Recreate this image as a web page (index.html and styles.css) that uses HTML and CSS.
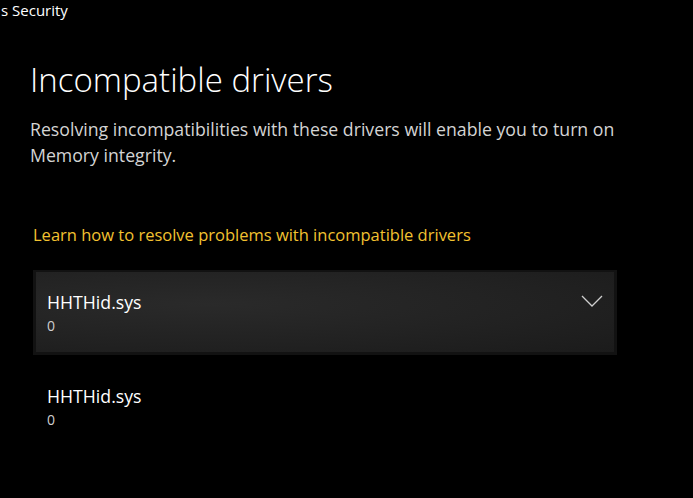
FILE: index.html
```html
<!DOCTYPE html>
<html lang="en">
<head>
    <meta charset="UTF-8">
    <title>Incompatible drivers</title>
    <link rel="stylesheet" href="styles.css">
</head>
<body>
    <div class="titlebar">s Security</div>

    <div class="page">
        <h1>Incompatible drivers</h1>
        <p class="intro">Resolving incompatibilities with these drivers will enable you to turn on Memory integrity.</p>

        <a class="learn-link" href="#">Learn how to resolve problems with incompatible drivers</a>

        <div class="driver-list">
            <div class="driver selected">
                <div class="driver-info">
                    <div class="driver-name">HHTHid.sys</div>
                    <div class="driver-count">0</div>
                </div>
                <svg class="chevron" width="22" height="12" viewBox="0 0 22 12">
                    <polyline points="1,1 11,11 21,1" fill="none" stroke="#cfcfcf" stroke-width="1.3"/>
                </svg>
            </div>
            <div class="driver">
                <div class="driver-info">
                    <div class="driver-name">HHTHid.sys</div>
                    <div class="driver-count">0</div>
                </div>
            </div>
        </div>
    </div>
</body>
</html>
```

FILE: styles.css
```css
html, body {
    background: #000;
}
body {
    margin: 0;
    color: #fff;
    font-family: "Open Sans", "Noto Sans", sans-serif;
    width: 693px;
    height: 498px;
    overflow: hidden;
}
.titlebar {
    height: 20px;
    padding-left: 1px;
    font-size: 15px;
    line-height: 20px;
    white-space: nowrap;
}
.page {
    padding: 38px 0 0 30px;
}
h1 {
    margin: 0;
    font-size: 33px;
    font-weight: 300;
    line-height: 44px;
}
.intro {
    margin: 14px 0 0;
    width: 620px;
    font-size: 17.7px;
    line-height: 26px;
    color: #d4d4d4;
}
.learn-link {
    display: block;
    margin: 56px 0 0 3px;
    font-size: 16.5px;
    line-height: 22px;
    color: #f2c230;
    text-decoration: none;
}
.driver-list {
    margin: 24px 0 0 3px;
    width: 584px;
}
.driver {
    display: flex;
    align-items: flex-start;
    justify-content: space-between;
    padding: 29px 14px 20px 14px;
}
.driver.selected {
    background: radial-gradient(ellipse at 30% 40%, #2a2a2a 0%, #222 55%, #1b1b1b 100%);
    border: 3px solid #121212;
    border-top-width: 2px;
    padding: 18px 11px 14px 11px;
}
.driver-name {
    font-size: 17.7px;
    line-height: 24px;
}
.driver-count {
    font-size: 14px;
    line-height: 24px;
    color: #cfcfcf;
}
.chevron {
    margin-top: 5px;
}
```
